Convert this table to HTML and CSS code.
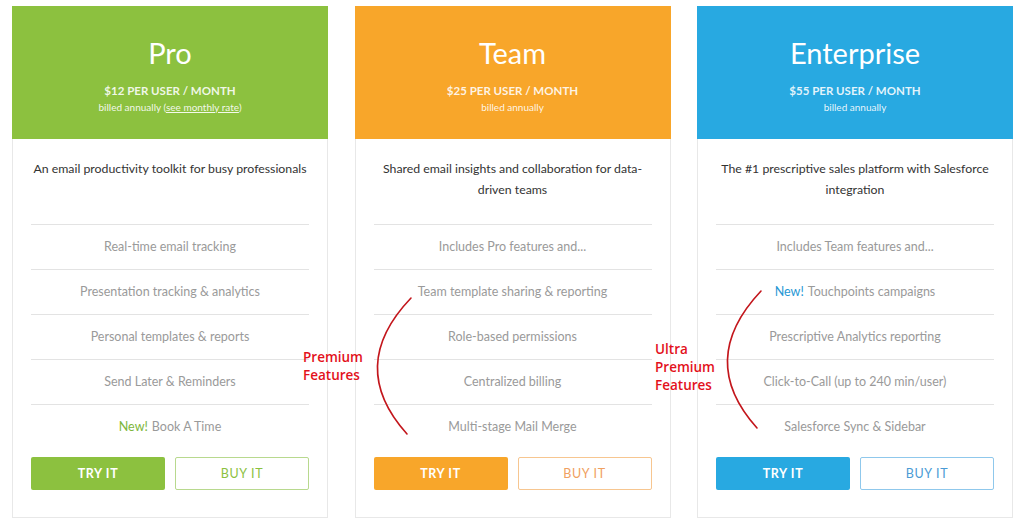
FILE: index.html
```html
<!DOCTYPE html>
<html lang="en">
<head>
<meta charset="utf-8">
<title>Pricing</title>
<link rel="stylesheet" href="styles.css">
</head>
<body>
<main class="pricing">
  <section class="plan plan-pro">
    <header class="plan-head">
      <h2 class="plan-name">Pro</h2>
      <p class="plan-price">$12 PER USER / MONTH</p>
      <p class="plan-billing">billed annually (<a href="#">see monthly rate</a>)</p>
    </header>
    <div class="plan-body">
      <p class="plan-desc">An email productivity toolkit for busy professionals</p>
      <ul class="features">
        <li>Real-time email tracking</li>
        <li>Presentation tracking &amp; analytics</li>
        <li>Personal templates &amp; reports</li>
        <li>Send Later &amp; Reminders</li>
        <li><span class="new">New!</span> Book A Time</li>
      </ul>
      <div class="actions">
        <a class="btn btn-try" href="#">TRY IT</a>
        <a class="btn btn-buy" href="#">BUY IT</a>
      </div>
    </div>
  </section>

  <section class="plan plan-team">
    <header class="plan-head">
      <h2 class="plan-name">Team</h2>
      <p class="plan-price">$25 PER USER / MONTH</p>
      <p class="plan-billing">billed annually</p>
    </header>
    <div class="plan-body">
      <p class="plan-desc">Shared email insights and collaboration for data-driven teams</p>
      <ul class="features">
        <li>Includes Pro features and...</li>
        <li>Team template sharing &amp; reporting</li>
        <li>Role-based permissions</li>
        <li>Centralized billing</li>
        <li>Multi-stage Mail Merge</li>
      </ul>
      <div class="actions">
        <a class="btn btn-try" href="#">TRY IT</a>
        <a class="btn btn-buy" href="#">BUY IT</a>
      </div>
    </div>
  </section>

  <section class="plan plan-ent">
    <header class="plan-head">
      <h2 class="plan-name">Enterprise</h2>
      <p class="plan-price">$55 PER USER / MONTH</p>
      <p class="plan-billing">billed annually</p>
    </header>
    <div class="plan-body">
      <p class="plan-desc">The #1 prescriptive sales platform with Salesforce integration</p>
      <ul class="features">
        <li>Includes Team features and...</li>
        <li><span class="new">New!</span> Touchpoints campaigns</li>
        <li>Prescriptive Analytics reporting</li>
        <li>Click-to-Call (up to 240 min/user)</li>
        <li>Salesforce Sync &amp; Sidebar</li>
      </ul>
      <div class="actions">
        <a class="btn btn-try" href="#">TRY IT</a>
        <a class="btn btn-buy" href="#">BUY IT</a>
      </div>
    </div>
  </section>

  <div class="note note-premium">Premium<br>Features</div>
  <div class="note note-ultra">Ultra<br>Premium<br>Features</div>
  <svg class="arcs" width="1024" height="531" viewBox="0 0 1024 531" aria-hidden="true">
    <path d="M411 298 Q346 366 407 434" fill="none" stroke="#c3161c" stroke-width="1.6" stroke-linecap="round"/>
    <path d="M761 291 Q696 360 757 428" fill="none" stroke="#c3161c" stroke-width="1.6" stroke-linecap="round"/>
  </svg>
</main>
</body>
</html>
```

FILE: styles.css
```css
* { box-sizing: border-box; }

html, body {
  margin: 0;
  padding: 0;
  background: #ffffff;
}

body {
  font-family: "Lato", "Open Sans", "Liberation Sans", sans-serif;
  color: #333;
}

.pricing {
  position: relative;
  display: grid;
  grid-template-columns: repeat(3, 1fr);
  column-gap: 26.5px;
  padding: 6px 11px 0 12px;
  height: 531px;
}

.plan {
  display: flex;
  flex-direction: column;
  height: 512px;
}

.plan-head {
  height: 133px;
  color: #fff;
  text-align: center;
  padding-top: 28px;
}

.plan-pro .plan-head { background: #8cc13f; }
.plan-team .plan-head { background: #f8a62a; }
.plan-ent .plan-head { background: #28a9e1; }

.plan-name {
  margin: 0;
  font-size: 29px;
  font-weight: 400;
  line-height: 38px;
}

.plan-price {
  margin: 12px 0 0;
  font-size: 11.5px;
  font-weight: 700;
  line-height: 14px;
  color: rgba(255,255,255,0.88);
}

.plan-billing {
  margin: 2px 0 0;
  font-size: 10px;
  line-height: 14px;
  color: rgba(255,255,255,0.9);
}

.plan-billing a {
  color: inherit;
  text-decoration: underline;
}

.plan-body {
  flex: 1;
  display: flex;
  flex-direction: column;
  border: 1px solid #e8e8e8;
  border-top: none;
  padding: 0 18px;
}

.plan-desc {
  margin: 0 -10px;
  height: 85px;
  padding: 19px 12px 0;
  text-align: center;
  font-size: 12.3px;
  line-height: 21px;
  color: #333;
}

.plan-team .plan-desc { padding: 19px 18px 0; }

.features {
  list-style: none;
  margin: 0;
  padding: 0;
}

.features li {
  height: 45px;
  border-top: 1px solid #e3e3e3;
  display: flex;
  align-items: center;
  justify-content: center;
  padding-bottom: 2px;
  font-size: 12.5px;
  color: #9a9a9a;
}

.features .new { margin-right: 4px; }
.plan-pro .new { color: #7db63a; }
.plan-ent .new { color: #2797d4; }

.actions {
  display: grid;
  grid-template-columns: 1fr 1fr;
  column-gap: 10px;
  margin-top: 8px;
}

.btn {
  display: flex;
  align-items: center;
  justify-content: center;
  height: 33px;
  border-radius: 2px;
  font-size: 12.5px;
  font-weight: 700;
  letter-spacing: 0.6px;
  text-decoration: none;
}

.btn-try { color: #fff; }
.btn-buy { background: #fff; font-weight: 400; }

.plan-pro .btn-try { background: #8cc13f; }
.plan-pro .btn-buy { border: 1px solid #b8d98e; color: #8cc13f; }
.plan-team .btn-try { background: #f8a62a; }
.plan-team .btn-buy { border: 1px solid #f7c690; color: #f0a060; }
.plan-ent .btn-try { background: #28a9e1; }
.plan-ent .btn-buy { border: 1px solid #8fc8ec; color: #4a9bd5; }

.note {
  position: absolute;
  color: #e3111b;
  font-family: "Open Sans", "Liberation Sans", sans-serif;
  font-size: 13.5px;
  font-weight: 600;
  line-height: 18px;
}

.note-premium { left: 303px; top: 348px; }
.note-ultra { left: 655px; top: 340px; }

.arcs {
  position: absolute;
  left: 0;
  top: 0;
  pointer-events: none;
}
```
